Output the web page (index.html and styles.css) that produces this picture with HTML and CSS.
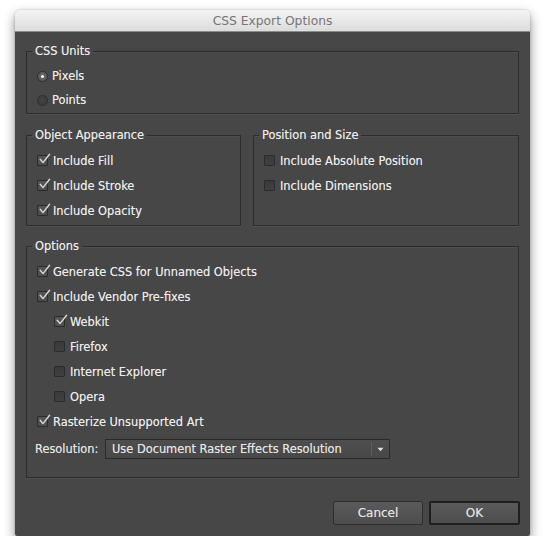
FILE: index.html
```html
<!DOCTYPE html>
<html>
<head>
<meta charset="utf-8">
<link rel="stylesheet" href="styles.css">
</head>
<body>
<div class="dialog">
  <div class="titlebar">CSS Export Options</div>
  <div class="content">
    <fieldset class="group units">
      <legend>CSS Units</legend>
      <div class="row r24"><span class="radio on"></span><span>Pixels</span></div>
      <div class="row r24"><span class="radio"></span><span>Points</span></div>
    </fieldset>

    <div class="pair">
      <fieldset class="group small">
        <legend>Object Appearance</legend>
        <div class="row"><span class="cb on"><svg viewBox="0 0 13 13"><path d="M2.2 6.2 L5 9.6 L11.6 1.2"/></svg></span><span>Include Fill</span></div>
        <div class="row"><span class="cb on"><svg viewBox="0 0 13 13"><path d="M2.2 6.2 L5 9.6 L11.6 1.2"/></svg></span><span>Include Stroke</span></div>
        <div class="row"><span class="cb on"><svg viewBox="0 0 13 13"><path d="M2.2 6.2 L5 9.6 L11.6 1.2"/></svg></span><span>Include Opacity</span></div>
      </fieldset>
      <fieldset class="group small">
        <legend>Position and Size</legend>
        <div class="row"><span class="cb"></span><span>Include Absolute Position</span></div>
        <div class="row"><span class="cb"></span><span>Include Dimensions</span></div>
      </fieldset>
    </div>

    <fieldset class="group options">
      <legend>Options</legend>
      <div class="row"><span class="cb on"><svg viewBox="0 0 13 13"><path d="M2.2 6.2 L5 9.6 L11.6 1.2"/></svg></span><span>Generate CSS for Unnamed Objects</span></div>
      <div class="row"><span class="cb on"><svg viewBox="0 0 13 13"><path d="M2.2 6.2 L5 9.6 L11.6 1.2"/></svg></span><span>Include Vendor Pre-fixes</span></div>
      <div class="row sub"><span class="cb on"><svg viewBox="0 0 13 13"><path d="M2.2 6.2 L5 9.6 L11.6 1.2"/></svg></span><span>Webkit</span></div>
      <div class="row sub"><span class="cb"></span><span>Firefox</span></div>
      <div class="row sub"><span class="cb"></span><span>Internet Explorer</span></div>
      <div class="row sub"><span class="cb"></span><span>Opera</span></div>
      <div class="row"><span class="cb on"><svg viewBox="0 0 13 13"><path d="M2.2 6.2 L5 9.6 L11.6 1.2"/></svg></span><span>Rasterize Unsupported Art</span></div>
      <div class="resrow">
        <span class="reslabel">Resolution:</span>
        <div class="select">
          <span class="seltext">Use Document Raster Effects Resolution</span>
          <span class="selbtn"><svg viewBox="0 0 8 6"><path d="M0.5 1 L7.5 1 L4 5 Z"/></svg></span>
        </div>
      </div>
    </fieldset>

    <div class="buttons">
      <div class="btn">Cancel</div>
      <div class="btn default">OK</div>
    </div>
  </div>
</div>
</body>
</html>
```

FILE: styles.css
```css
html, body {
  margin: 0;
  padding: 0;
  background: #ffffff;
}
body {
  padding: 10px 0 0 15px;
  font-family: "DejaVu Sans", "Liberation Sans", sans-serif;
  font-size: 11.4px;
}
.dialog {
  width: 515px;
  border-radius: 5px 5px 2px 2px;
  overflow: hidden;
  box-shadow: 0 5px 12px rgba(0,0,0,0.45), 0 0 2px rgba(0,0,0,0.25);
}
.titlebar {
  height: 22px;
  box-sizing: border-box;
  background: linear-gradient(#f4f4f4, #dcdcdc);
  border-bottom: 1px solid #8c8c8c;
  color: #767676;
  font-size: 12.3px;
  display: flex;
  align-items: center;
  justify-content: center;
  padding-top: 1px;
}
.content {
  background: #474747;
  padding: 12px 11px 11px 11px;
  display: flex;
  flex-direction: column;
  color: #ededed;
  text-shadow: 0 0 0.5px rgba(255,255,255,0.55);
}
.group {
  margin: 0;
  border: 1px solid #2c2c2c;
  box-shadow: 0 1px 0 rgba(255,255,255,0.05), inset 0 1px 0 rgba(255,255,255,0.04);
  padding: 0 10px;
  min-width: 0;
}
.group legend {
  line-height: 14px;
  padding: 0 3px;
  margin-left: -5px;
  color: #ececec;
}
.units {
  padding-top: 6px;
  padding-bottom: 1px;
}
.pair {
  margin-top: 14px;
  display: grid;
  grid-template-columns: 215px 1fr;
  column-gap: 12px;
}
.small {
  padding-top: 6px;
  padding-bottom: 2px;
}
.options {
  margin-top: 13px;
  padding-top: 6px;
  padding-bottom: 18px;
}
.row {
  height: 25px;
  display: flex;
  align-items: center;
  gap: 4px;
}
.row.r24 {
  height: 24px;
}
.row.sub {
  padding-left: 17px;
}
.radio {
  width: 11px;
  height: 11px;
  box-sizing: border-box;
  border-radius: 50%;
  border: 1px solid #2d2d2d;
  background: radial-gradient(circle at 50% 40%, #444 0%, #383838 100%);
  position: relative;
  flex: none;
}
.radio.on {
  background: radial-gradient(circle at 50% 40%, #6a6a6a 0%, #545454 100%);
}
.radio.on::after {
  content: "";
  position: absolute;
  left: 3px;
  top: 3px;
  width: 3px;
  height: 3px;
  border-radius: 50%;
  background: #f2f2f2;
}
.cb {
  width: 11px;
  height: 11px;
  box-sizing: border-box;
  border: 1px solid #2b2b2b;
  border-radius: 1px;
  background: linear-gradient(#3a3a3a, #404040);
  position: relative;
  flex: none;
  margin-right: 1px;
}
.cb.on {
  background: linear-gradient(#555, #4d4d4d);
}
.cb svg {
  position: absolute;
  left: 0;
  top: -3px;
  width: 13px;
  height: 13px;
  overflow: visible;
}
.cb svg path {
  fill: none;
  stroke: #d9d9d9;
  stroke-width: 1.4;
  stroke-linecap: round;
  stroke-linejoin: round;
}
.resrow {
  margin-top: 5px;
  display: flex;
  align-items: center;
  margin-left: -2px;
}
.reslabel {
  width: 70px;
  color: #e6e6e6;
  flex: none;
}
.select {
  width: 285px;
  height: 20px;
  box-sizing: border-box;
  border: 1px solid #2a2a2a;
  background: linear-gradient(#4e4e4e, #484848);
  display: flex;
  align-items: center;
}
.seltext {
  flex: 1;
  padding-left: 6px;
  color: #e6e6e6;
}
.selbtn {
  width: 17px;
  height: 14px;
  border-left: 1px solid #5e5e5e;
  display: flex;
  align-items: center;
  justify-content: center;
}
.selbtn svg {
  width: 7px;
  height: 5px;
}
.selbtn svg path {
  fill: #e4e4e4;
}
.buttons {
  margin-top: 23px;
  display: flex;
  justify-content: flex-end;
  gap: 6px;
  margin-right: -1px;
}
.btn {
  width: 90px;
  height: 24px;
  box-sizing: border-box;
  border: 1px solid #2e2e2e;
  border-radius: 2px;
  background: linear-gradient(#5a5a5a, #4d4d4d);
  color: #e2e2e2;
  font-size: 12px;
  display: flex;
  align-items: center;
  justify-content: center;
}
.btn.default {
  width: 91px;
  border: 2px solid #1f1f1f;
}
```
